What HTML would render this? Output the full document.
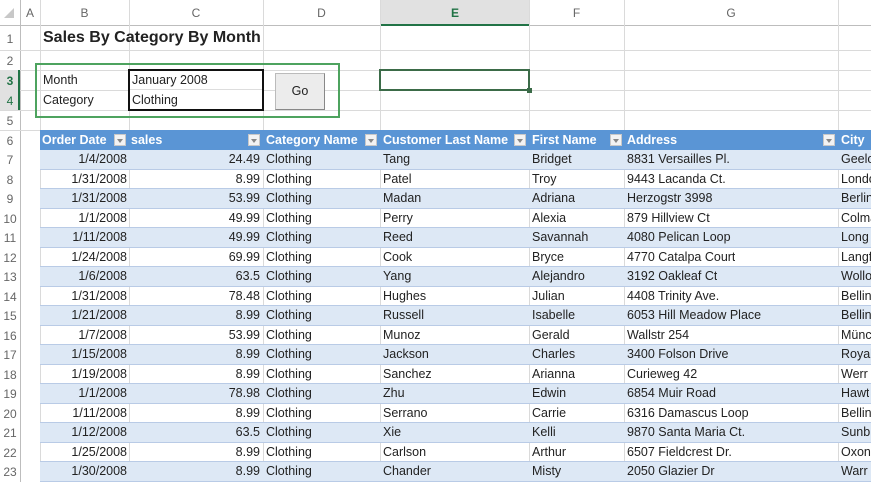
<!DOCTYPE html>
<html><head><meta charset="utf-8"><style>
body{margin:0;width:871px;height:482px;overflow:hidden;background:#fff;font-family:"Liberation Sans",Arial,sans-serif;font-size:12.5px;color:#222;position:relative}
.a{position:absolute}
.vl{position:absolute;top:0;height:482px;width:1px;background:#dadada}
.hl{position:absolute;left:0;width:871px;height:1px;background:#dadada}
.rh{position:absolute;left:0;width:20px;text-align:center;color:#666;font-size:12px}
.ch{position:absolute;top:6px;text-align:center;color:#666;font-size:12px}
.r{position:absolute;left:40px;width:831px;height:19.5px;line-height:19.5px;border-bottom:1px solid #b9cbe6;box-sizing:border-box;white-space:nowrap}
.r.b{background:#dde8f5}
.r span{position:absolute;top:0;overflow:hidden}
.c1{left:0;width:87px;text-align:right}
.c2{left:89px;width:131px;text-align:right}
.c3{left:226px}.c4{left:343px}.c5{left:492px}.c6{left:587px}.c7{left:801px}
.hd{position:absolute;left:40px;top:130px;width:831px;height:20px;background:#5a95d5;color:#fff;font-weight:bold;line-height:20px;white-space:nowrap}
.hd span{position:absolute;top:0}
.dd{position:absolute;top:4px;width:12px;height:12px;background:#f3f3f3;border:1px solid #c8c8c8;box-sizing:border-box}
.dd:after{content:"";position:absolute;left:2px;top:4px;border-left:3px solid transparent;border-right:3px solid transparent;border-top:4px solid #888}
</style></head><body>
<div class="a" style="left:0;top:0;width:871px;height:25px;background:#fff;border-bottom:1px solid #bdbdbd"></div>
<div class="a" style="left:380px;top:0;width:150px;height:24px;background:#e1e1e1;border-bottom:2px solid #217346"></div>
<div class="a" style="left:4px;top:8px;width:0;height:0;border-left:10px solid transparent;border-bottom:10px solid #c8c8c8"></div>
<div class="vl" style="left:20px;background:#bdbdbd"></div>
<div class="vl" style="left:40px"></div><div class="vl" style="left:129px"></div><div class="vl" style="left:263px"></div><div class="vl" style="left:380px"></div><div class="vl" style="left:529px"></div><div class="vl" style="left:624px"></div><div class="vl" style="left:838px"></div>
<div class="ch" style="left:20px;width:20px">A</div><div class="ch" style="left:40px;width:89px">B</div><div class="ch" style="left:129px;width:134px">C</div><div class="ch" style="left:263px;width:117px">D</div><div class="ch" style="left:380px;width:150px;color:#217346;font-weight:bold">E</div><div class="ch" style="left:529px;width:95px">F</div><div class="ch" style="left:624px;width:214px">G</div>
<div class="hl" style="top:50px"></div><div class="hl" style="top:70px"></div><div class="hl" style="top:90px"></div><div class="hl" style="top:110px"></div><div class="hl" style="top:130px"></div>
<div class="a" style="left:0;top:70px;width:20px;height:40px;background:#e1e1e1;border-right:2px solid #217346;box-sizing:border-box"></div>
<div class="rh" style="top:32px">1</div><div class="rh" style="top:54px">2</div><div class="rh" style="top:74px;color:#217346;font-weight:bold">3</div><div class="rh" style="top:94px;color:#217346">4</div><div class="rh" style="top:114px">5</div><div class="rh" style="top:134px">6</div>
<div class="a" style="left:43px;top:29px;font-weight:bold;font-size:16px">Sales By Category By Month</div>
<div class="a" style="left:35px;top:63px;width:305px;height:55px;border:2.5px solid #4ea35f;box-sizing:border-box"></div>
<div class="a" style="left:128px;top:69px;width:136px;height:42px;border:2px solid #111;box-sizing:border-box;background:#fff"></div>
<div class="a" style="left:130px;top:89px;width:132px;height:1px;background:#ddd"></div>
<div class="a" style="left:43px;top:73px">Month</div><div class="a" style="left:43px;top:93px">Category</div>
<div class="a" style="left:132px;top:73px">January 2008</div><div class="a" style="left:132px;top:93px">Clothing</div>
<div class="a" style="left:275px;top:73px;width:50px;height:37px;background:#ececec;border:1px solid #bbb;border-right-color:#888;border-bottom-color:#888;box-sizing:border-box;text-align:center;line-height:35px">Go</div>
<div class="a" style="left:379px;top:69px;width:151px;height:22px;border:2px solid #3b6b48;box-sizing:border-box"></div>
<div class="a" style="left:527px;top:88px;width:5px;height:5px;background:#3b6b48"></div>
<div class="hd">
<span style="left:2px">Order Date</span><div class="dd" style="left:74px"></div>
<span style="left:91px">sales</span><div class="dd" style="left:208px"></div>
<span style="left:226px">Category Name</span><div class="dd" style="left:325px"></div>
<span style="left:343px">Customer Last Name</span><div class="dd" style="left:474px"></div>
<span style="left:492px">First Name</span><div class="dd" style="left:570px"></div>
<span style="left:587px">Address</span><div class="dd" style="left:783px"></div>
<span style="left:801px">City</span></div>
<div class="a" style="left:0;top:150px;width:20px;">
<div class="rh" style="top:3px">7</div><div class="rh" style="top:22.5px">8</div><div class="rh" style="top:42px">9</div><div class="rh" style="top:61.5px">10</div><div class="rh" style="top:81px">11</div><div class="rh" style="top:100.5px">12</div><div class="rh" style="top:120px">13</div><div class="rh" style="top:139.5px">14</div><div class="rh" style="top:159px">15</div><div class="rh" style="top:178.5px">16</div><div class="rh" style="top:198px">17</div><div class="rh" style="top:217.5px">18</div><div class="rh" style="top:237px">19</div><div class="rh" style="top:256.5px">20</div><div class="rh" style="top:276px">21</div><div class="rh" style="top:295.5px">22</div><div class="rh" style="top:315px">23</div></div>
<div class="r b" style="top:150px"><span class="c1">1/4/2008</span><span class="c2">24.49</span><span class="c3">Clothing</span><span class="c4">Tang</span><span class="c5">Bridget</span><span class="c6">8831 Versailles Pl.</span><span class="c7">Geelong</span></div>
<div class="r" style="top:169.5px"><span class="c1">1/31/2008</span><span class="c2">8.99</span><span class="c3">Clothing</span><span class="c4">Patel</span><span class="c5">Troy</span><span class="c6">9443 Lacanda Ct.</span><span class="c7">London</span></div>
<div class="r b" style="top:189px"><span class="c1">1/31/2008</span><span class="c2">53.99</span><span class="c3">Clothing</span><span class="c4">Madan</span><span class="c5">Adriana</span><span class="c6">Herzogstr 3998</span><span class="c7">Berlin</span></div>
<div class="r" style="top:208.5px"><span class="c1">1/1/2008</span><span class="c2">49.99</span><span class="c3">Clothing</span><span class="c4">Perry</span><span class="c5">Alexia</span><span class="c6">879 Hillview Ct</span><span class="c7">Colma</span></div>
<div class="r b" style="top:228px"><span class="c1">1/11/2008</span><span class="c2">49.99</span><span class="c3">Clothing</span><span class="c4">Reed</span><span class="c5">Savannah</span><span class="c6">4080 Pelican Loop</span><span class="c7">Long</span></div>
<div class="r" style="top:247.5px"><span class="c1">1/24/2008</span><span class="c2">69.99</span><span class="c3">Clothing</span><span class="c4">Cook</span><span class="c5">Bryce</span><span class="c6">4770 Catalpa Court</span><span class="c7">Langf</span></div>
<div class="r b" style="top:267px"><span class="c1">1/6/2008</span><span class="c2">63.5</span><span class="c3">Clothing</span><span class="c4">Yang</span><span class="c5">Alejandro</span><span class="c6">3192 Oakleaf Ct</span><span class="c7">Wollo</span></div>
<div class="r" style="top:286.5px"><span class="c1">1/31/2008</span><span class="c2">78.48</span><span class="c3">Clothing</span><span class="c4">Hughes</span><span class="c5">Julian</span><span class="c6">4408 Trinity Ave.</span><span class="c7">Bellin</span></div>
<div class="r b" style="top:306px"><span class="c1">1/21/2008</span><span class="c2">8.99</span><span class="c3">Clothing</span><span class="c4">Russell</span><span class="c5">Isabelle</span><span class="c6">6053 Hill Meadow Place</span><span class="c7">Bellin</span></div>
<div class="r" style="top:325.5px"><span class="c1">1/7/2008</span><span class="c2">53.99</span><span class="c3">Clothing</span><span class="c4">Munoz</span><span class="c5">Gerald</span><span class="c6">Wallstr 254</span><span class="c7">Münc</span></div>
<div class="r b" style="top:345px"><span class="c1">1/15/2008</span><span class="c2">8.99</span><span class="c3">Clothing</span><span class="c4">Jackson</span><span class="c5">Charles</span><span class="c6">3400 Folson Drive</span><span class="c7">Royal</span></div>
<div class="r" style="top:364.5px"><span class="c1">1/19/2008</span><span class="c2">8.99</span><span class="c3">Clothing</span><span class="c4">Sanchez</span><span class="c5">Arianna</span><span class="c6">Curieweg 42</span><span class="c7">Werr</span></div>
<div class="r b" style="top:384px"><span class="c1">1/1/2008</span><span class="c2">78.98</span><span class="c3">Clothing</span><span class="c4">Zhu</span><span class="c5">Edwin</span><span class="c6">6854 Muir Road</span><span class="c7">Hawt</span></div>
<div class="r" style="top:403.5px"><span class="c1">1/11/2008</span><span class="c2">8.99</span><span class="c3">Clothing</span><span class="c4">Serrano</span><span class="c5">Carrie</span><span class="c6">6316 Damascus Loop</span><span class="c7">Bellin</span></div>
<div class="r b" style="top:423px"><span class="c1">1/12/2008</span><span class="c2">63.5</span><span class="c3">Clothing</span><span class="c4">Xie</span><span class="c5">Kelli</span><span class="c6">9870 Santa Maria Ct.</span><span class="c7">Sunb</span></div>
<div class="r" style="top:442.5px"><span class="c1">1/25/2008</span><span class="c2">8.99</span><span class="c3">Clothing</span><span class="c4">Carlson</span><span class="c5">Arthur</span><span class="c6">6507 Fieldcrest Dr.</span><span class="c7">Oxon</span></div>
<div class="r b" style="top:462px"><span class="c1">1/30/2008</span><span class="c2">8.99</span><span class="c3">Clothing</span><span class="c4">Chander</span><span class="c5">Misty</span><span class="c6">2050 Glazier Dr</span><span class="c7">Warr</span></div>
</body></html>
